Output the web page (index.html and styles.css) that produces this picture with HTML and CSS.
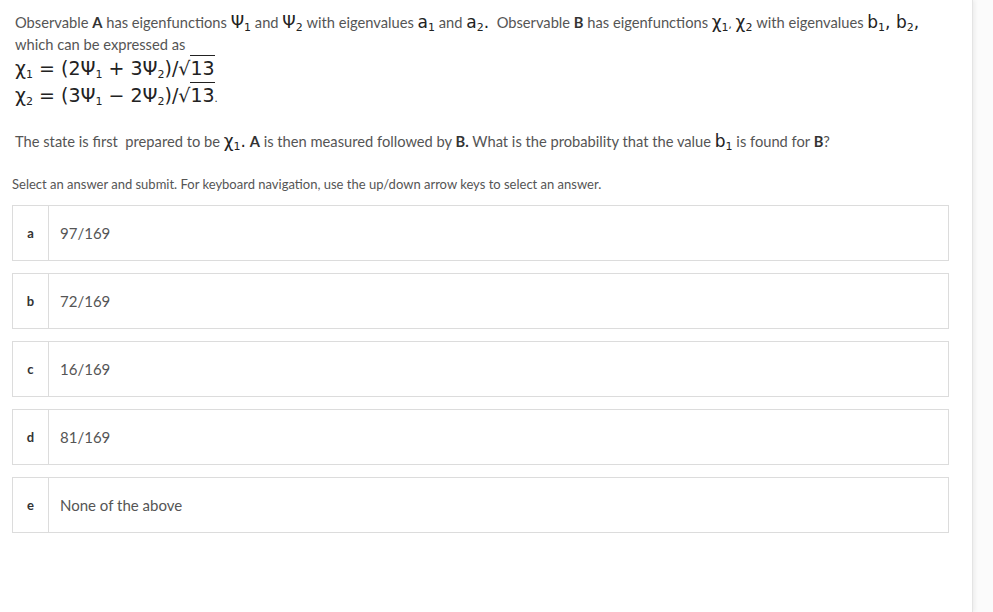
FILE: index.html
```html
<!DOCTYPE html>
<html>
<head>
<meta charset="utf-8">
<link rel="stylesheet" href="styles.css">
</head>
<body>
<div class="panel">
  <div class="question">
    <p class="line">Observable <b>A</b> has eigenfunctions <span class="m">Ψ<sub>1</sub></span> and <span class="m">Ψ<sub>2</sub></span> with eigenvalues <span class="m">a<sub>1</sub></span> and <span class="m">a<sub>2</sub>.</span>&nbsp; Observable <b>B</b> has eigenfunctions <span class="m">χ<sub>1</sub></span><span class="sep">,</span> <span class="m">χ<sub>2</sub></span> with eigenvalues <span class="m">b<sub>1</sub>, b<sub>2</sub>,</span></p>
    <p class="line">which can be expressed as</p>
    <div class="eq">χ<sub>1</sub> = (2Ψ<sub>1</sub> + 3Ψ<sub>2</sub>)/√<span class="ov">13</span></div>
    <div class="eq">χ<sub>2</sub> = (3Ψ<sub>1</sub> − 2Ψ<sub>2</sub>)/√<span class="ov">13</span><span class="dot">.</span></div>
    <p class="line ask">The state is first&nbsp; prepared to be <span class="m">χ<sub>1</sub>.</span> <b>A</b> is then measured followed by <b>B.</b> What is the probability that the value <span class="m">b<sub>1</sub></span> is found for <b>B</b>?</p>
  </div>
  <p class="hint">Select an answer and submit. For keyboard navigation, use the up/down arrow keys to select an answer.</p>
  <div class="answers">
    <div class="answer"><div class="label">a</div><div class="text">97/169</div></div>
    <div class="answer"><div class="label">b</div><div class="text">72/169</div></div>
    <div class="answer"><div class="label">c</div><div class="text">16/169</div></div>
    <div class="answer"><div class="label">d</div><div class="text">81/169</div></div>
    <div class="answer"><div class="label">e</div><div class="text">None of the above</div></div>
  </div>
</div>
</body>
</html>
```
FILE: styles.css
```css
html, body {
  margin: 0;
  padding: 0;
  background: #fbfbfb;
}
body {
  font-family: "Lato", "Liberation Sans", sans-serif;
  color: #555;
}
.panel {
  width: 960px;
  height: 612px;
  background: #fff;
  padding: 0 0 0 12px;
  border-right: 1px solid #e4e4e4;
  box-shadow: 2px 0 4px rgba(0,0,0,0.06);
  box-sizing: content-box;
}
.question {
  padding: 11px 0 0 3px;
  font-size: 14.7px;
}
.line {
  margin: 0;
  line-height: 22px;
}
b { color: #333; font-weight: 700; }
.m {
  font-family: "DejaVu Sans", sans-serif;
  color: #222;
  font-size: 17px;
  line-height: 0;
}
.m sub, .eq sub {
  font-size: 11px;
  vertical-align: -3px;
  line-height: 0;
}
.sep { font-family: "DejaVu Sans", sans-serif; font-size: 10px; color: #222; line-height: 0; }
.eq {
  font-family: "DejaVu Sans", sans-serif;
  font-size: 19px;
  color: #222;
  line-height: 27px;
}
.ov { border-top: 1px solid #222; padding-top: 1px; }
.dot { font-size: 10px; }
.ask { margin-top: 18px; }
.hint {
  margin: 24px 0 13px;
  font-size: 13px;
  color: #555;
  line-height: 16px;
}
.answers {
  width: 937px;
  display: flex;
  flex-direction: column;
  gap: 12px;
}
.answer {
  display: flex;
  height: 54px;
  border: 1px solid #dcdcdc;
  font-size: 15px;
}
.label {
  width: 35px;
  border-right: 1px solid #dcdcdc;
  display: flex;
  align-items: center;
  justify-content: center;
  font-weight: 700;
  color: #333;
  font-size: 13px;
}
.text {
  display: flex;
  align-items: center;
  padding-left: 11px;
  color: #555;
}
```
